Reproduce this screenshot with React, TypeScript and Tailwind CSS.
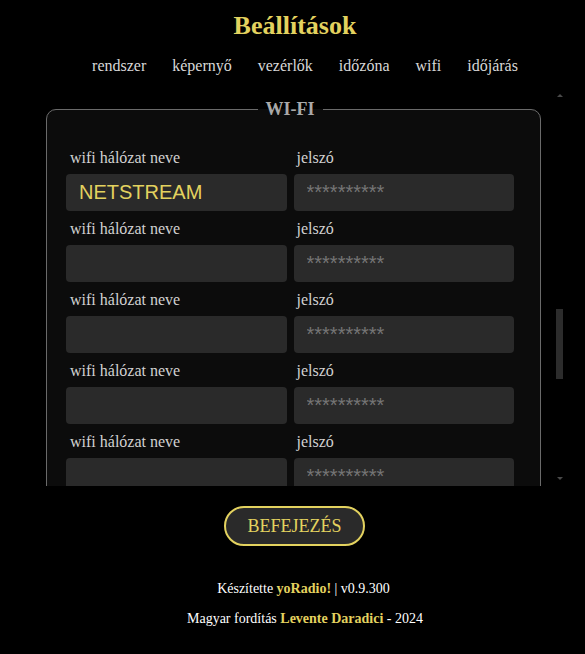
import React from 'react';

const navItems = ['rendszer', 'képernyő', 'vezérlők', 'időzóna', 'wifi', 'időjárás'];

const networks = ['NETSTREAM', '', '', '', ''];

function WifiRow({ ssid }: { ssid: string }) {
  return (
    <div className="grid grid-cols-2 gap-x-[7px]">
      <div className="pl-[4px] pt-[9px] pb-[7px] leading-[18px] text-[16px] text-[#d2d2d2]">wifi hálózat neve</div>
      <div className="pl-[3px] pt-[9px] pb-[7px] leading-[18px] text-[16px] text-[#d2d2d2]">jelszó</div>
      <input
        readOnly
        value={ssid}
        className="h-[37px] w-full min-w-0 rounded-[4px] bg-[#2a2a2a] px-[13px] font-['Liberation_Sans',Arial,sans-serif] text-[20px] text-[#e3d25f] outline-none"
      />
      <input
        readOnly
        type="password"
        placeholder="**********"
        className="h-[37px] w-full min-w-0 rounded-[4px] bg-[#2a2a2a] px-[13px] font-['Liberation_Sans',Arial,sans-serif] text-[20px] text-[#e3d25f] outline-none placeholder:text-[#757575]"
      />
    </div>
  );
}

export default function App() {
  return (
    <div className="min-h-screen bg-black font-['Liberation_Serif','Times_New_Roman',serif]">
      {/* Header */}
      <h1 className="pt-[11px] pl-[5px] text-center text-[26px] font-bold leading-[30px] text-[#e3d25f]">Beállítások</h1>

      <nav className="mt-[16px] flex justify-center gap-[26px] pl-[25px] text-[16px] leading-[18px] text-[#d8d8d8]">
        {navItems.map((item) => (
          <span key={item}>{item}</span>
        ))}
      </nav>

      {/* Scroll area */}
      <div className="mt-[13px] flex h-[398px] pr-[18px]">
        <div className="flex-1 overflow-hidden pt-[11px]">
          <fieldset className="ml-[46px] mr-[11px] rounded-[10px] border border-[#6a6a6a] bg-[#0c0c0c] pl-[19px] pr-[26px] pt-[21px] pb-[20px]">
            <legend className="mx-auto px-[8px] text-[18px] font-bold leading-[20px] text-[#a9a9a9]">WI-FI</legend>
            {networks.map((n, i) => (
              <WifiRow key={i} ssid={n} />
            ))}
          </fieldset>
        </div>

        {/* Scrollbar */}
        <div className="flex w-[15px] flex-col items-center">
          <div className="flex h-[15px] items-center justify-center">
            <div className="h-0 w-0 border-x-[3px] border-b-[3px] border-x-transparent border-b-[#4a4a4a]" />
          </div>
          <div className="mt-[206px] h-[70px] w-[7px] bg-[#2c2c2c]" />
          <div className="flex-1" />
          <div className="flex h-[15px] items-center justify-center">
            <div className="h-0 w-0 border-x-[3px] border-t-[3px] border-x-transparent border-t-[#4a4a4a]" />
          </div>
        </div>
      </div>

      {/* Done button */}
      <div className="mt-[20px] flex justify-center pl-[4px]">
        <button className="h-[40px] w-[141px] rounded-full border-2 border-[#e3d25f] bg-[#2a2a2a] text-[18px] text-[#e3d25f]">
          BEFEJEZÉS
        </button>
      </div>

      {/* Footer */}
      <div className="mt-[35px] pl-[22px] text-center text-[14px] leading-[16px] text-white">
        Készítette <span className="font-bold text-[#e3d25f]">yoRadio!</span> | v0.9.300
      </div>
      <div className="mt-[14px] pl-[25px] text-center text-[14px] leading-[16px] text-white">
        Magyar fordítás <span className="font-bold text-[#e3d25f]">Levente Daradici</span> - 2024
      </div>
    </div>
  );
}
